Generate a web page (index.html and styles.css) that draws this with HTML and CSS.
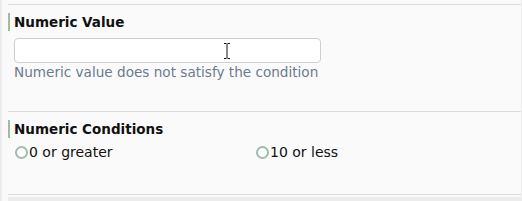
FILE: index.html
```html
<!DOCTYPE html>
<html lang="en">
<head>
    <meta charset="UTF-8">
    <title>Numeric Settings</title>
    <link rel="stylesheet" href="styles.css">
</head>
<body>
    <div class="panel">
        <div class="section">
            <h2 class="section-title">Numeric Value</h2>
            <div class="field">
                <input type="text" class="text-input">
                <!-- text cursor over the input -->
                <svg class="cursor" width="8" height="16" viewBox="0 0 8 16">
                    <path d="M1 0.5h2.5M4.5 0.5h2.5M4 1v14M1 15.5h2.5M4.5 15.5h2.5" stroke="#111" stroke-width="1" fill="none"/>
                </svg>
            </div>
            <p class="hint">Numeric value does not satisfy the condition</p>
        </div>

        <div class="section section-conditions">
            <h2 class="section-title">Numeric Conditions</h2>
            <div class="options">
                <label class="option"><span class="radio"></span>0 or greater</label>
                <label class="option"><span class="radio"></span>10 or less</label>
            </div>
        </div>

        <div class="footer-bar"></div>
    </div>
</body>
</html>
```

FILE: styles.css
```css
* {
    margin: 0;
    padding: 0;
    box-sizing: border-box;
}

body {
    font-family: 'DejaVu Sans', Verdana, sans-serif;
    background: #ececec;
    color: #111;
    height: 201px;
    overflow: hidden;
}

.panel {
    margin-left: 2px;
    margin-right: 1px;
    padding-left: 6px;
    background: #fafafa;
    height: 201px;
    display: flex;
    flex-direction: column;
}

.section {
    border-top: 1px solid #dcdcdc;
    margin-top: 4px;
    padding: 8px 0 0 0;
    height: 107px;
}

.section-conditions {
    margin-top: 0;
    height: 83px;
}

.section-title {
    font-size: 13.5px;
    font-weight: bold;
    border-left: 2px solid #9cbf98;
    padding-left: 4px;
    line-height: 18px;
    margin-bottom: 7px;
}

.field {
    position: relative;
    margin-left: 6px;
    width: 307px;
}

.text-input {
    display: block;
    width: 307px;
    height: 25px;
    border: 1px solid #cfcfcf;
    border-radius: 4px;
    background: #fff;
    outline: none;
}

.cursor {
    position: absolute;
    left: 209px;
    top: 5px;
}

.hint {
    margin-left: 6px;
    margin-top: 1px;
    font-size: 13.6px;
    color: #6b7a8a;
}

.options {
    display: grid;
    grid-template-columns: 241px 241px;
    margin-left: 7px;
    margin-top: -1px;
}

.option {
    display: flex;
    align-items: center;
    font-size: 14px;
    color: #111;
}

.radio {
    width: 13px;
    height: 13px;
    border: 2px solid #9dbcae;
    border-radius: 50%;
    background: #fff;
    margin-right: 1px;
}

.footer-bar {
    border-top: 1px solid #dcdcdc;
    margin-top: 0;
    flex: 1;
    background: #ececec;
    box-shadow: inset 0 2px 0 #fafafa;
}
```
